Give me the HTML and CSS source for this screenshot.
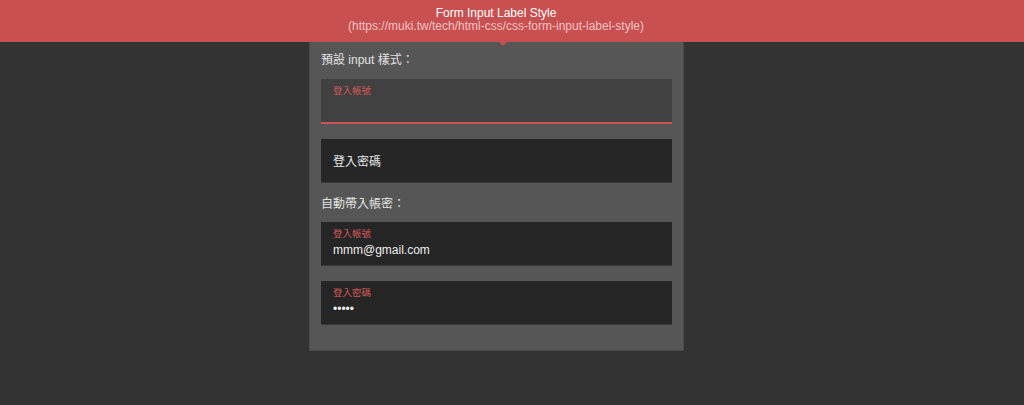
FILE: index.html
```html
<!DOCTYPE html>
<html lang="zh-Hant">
<head>
    <meta charset="UTF-8">
    <meta name="viewport" content="width=device-width, initial-scale=1.0">
    <title>Form Input Label Style</title>
    <link rel="stylesheet" href="styles.css">
</head>
<body>
    <!-- 上方標題列 -->
    <header class="top-bar">
        <div class="top-title">Form Input Label Style</div>
        <div class="top-link">(https://muki.tw/tech/html-css/css-form-input-label-style)</div>
        <span class="top-arrow"></span>
    </header>

    <div class="panel">
        <h2 class="panel-title">預設 input 樣式：</h2>
        <div class="group">
            <label class="field is-focus">
                <span class="field-label">登入帳號</span>
                <input class="field-input" type="text">
            </label>
            <label class="field is-empty">
                <input class="field-input" type="password" placeholder="登入密碼">
            </label>
        </div>

        <h2 class="panel-title second">自動帶入帳密：</h2>
        <div class="group">
            <label class="field">
                <span class="field-label">登入帳號</span>
                <input class="field-input" type="text" value="mmm@gmail.com">
            </label>
            <label class="field">
                <span class="field-label">登入密碼</span>
                <input class="field-input" type="password" value="mmmmm">
            </label>
        </div>
    </div>
</body>
</html>
```

FILE: styles.css
```css
body {
    margin: 0;
    background-color: #333;
    font-family: "Liberation Sans", "Noto Sans CJK TC", Arial, sans-serif;
    color: #ddd;
}

/* 標題列 */
.top-bar {
    position: relative;
    height: 42px;
    box-sizing: border-box;
    padding: 7px 32px 0 0;
    background-color: #c95050;
    text-align: center;
    font-size: 12px;
    line-height: 13px;
}
.top-title {
    color: #fff;
}
.top-link {
    color: #f0c2c2;
}
.top-arrow {
    position: absolute;
    left: 499px;
    bottom: -4px;
    width: 0;
    height: 0;
    border-left: 4px solid transparent;
    border-right: 4px solid transparent;
    border-top: 4px solid #c95050;
}

/* 表單區塊 */
.panel {
    width: 375px;
    box-sizing: border-box;
    margin-left: 309px;
    padding: 10px 12px 26px;
    background-color: #565656;
    box-shadow: inset 1px 0 #4b4b4b, inset -1px 0 #4b4b4b, inset 0 -1px #4b4b4b;
}
.panel-title {
    margin: 0 0 11px;
    font-size: 12px;
    line-height: 16px;
    font-weight: normal;
    color: #e2e2e2;
}
.panel-title.second {
    margin-top: 13px;
    margin-bottom: 10px;
}

.field {
    display: block;
    box-sizing: border-box;
    height: 44px;
    padding: 6px 12px 0;
    background-color: #262626;
    border-bottom: 1px solid #3a3a3a;
}
.field + .field {
    margin-top: 15px;
}
.field.is-focus {
    height: 45px;
    background-color: #414141;
    border-bottom: 2px solid #d05555;
}
.field-label {
    display: block;
    font-size: 9.5px;
    line-height: 11px;
    color: #d45a5a;
}
.field-input {
    display: block;
    width: 100%;
    height: 17px;
    margin-top: 3px;
    padding: 0;
    border: none;
    outline: none;
    background: transparent;
    font-family: inherit;
    font-size: 12px;
    line-height: 17px;
    color: #eee;
}
.field.is-empty {
    padding-top: 0;
}
.field.is-empty .field-input {
    margin-top: 0;
    height: 40px;
    padding-top: 3px;
    line-height: 40px;
}
.field.is-empty .field-input::placeholder {
    color: #e6e6e6;
}
```
